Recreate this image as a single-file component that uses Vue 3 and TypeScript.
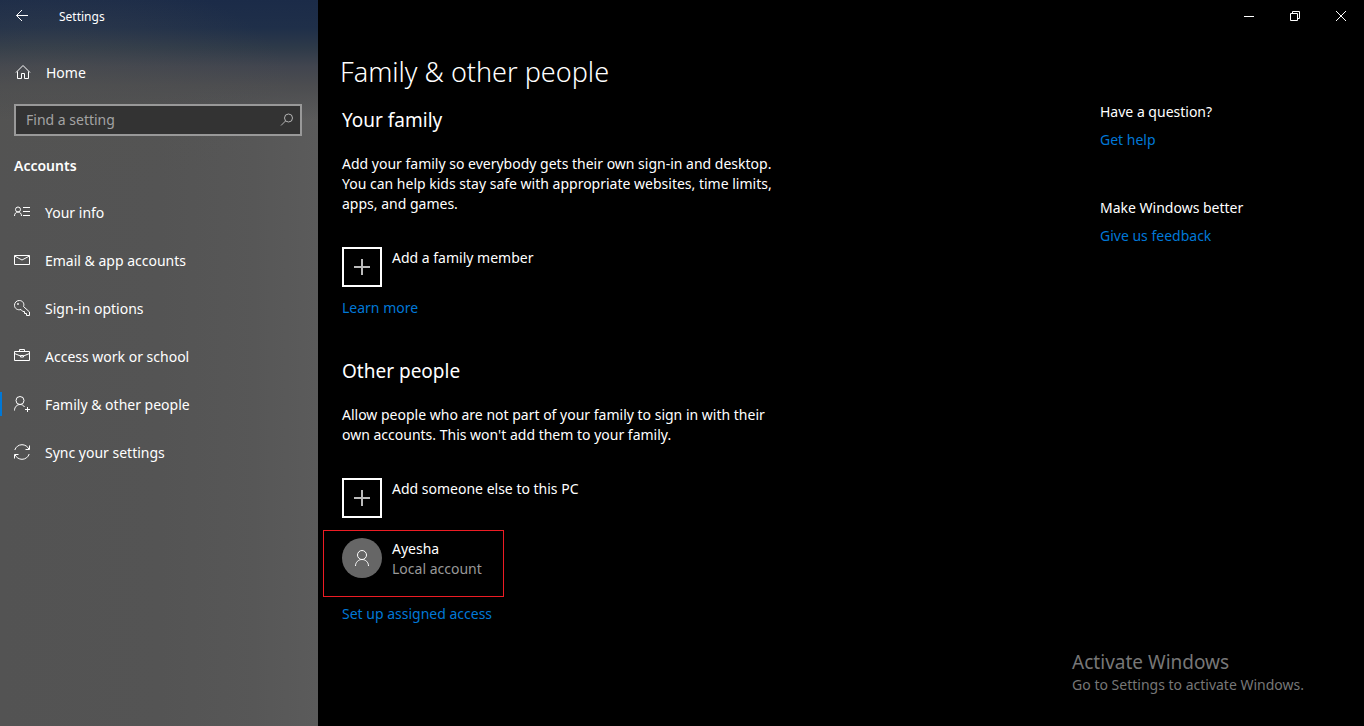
<script setup lang="ts">
import { ref } from 'vue'

type IconName = 'info' | 'mail' | 'key' | 'work' | 'family' | 'sync'

interface NavItem {
  label: string
  icon: IconName
}

const query = ref('')
const active = ref('Family & other people')

const items: NavItem[] = [
  { label: 'Your info', icon: 'info' },
  { label: 'Email & app accounts', icon: 'mail' },
  { label: 'Sign-in options', icon: 'key' },
  { label: 'Access work or school', icon: 'work' },
  { label: 'Family & other people', icon: 'family' },
  { label: 'Sync your settings', icon: 'sync' },
]
</script>

<template>
  <div class="window">
    <aside class="sidebar">
      <header class="titlebar">
        <button class="back" type="button" aria-label="Back">
          <svg class="icon" width="14" height="16" viewBox="0 0 14 16">
            <path d="M13 7.500H1.500M7 2L1.500 7.500 7 13" />
          </svg>
        </button>
        <span class="app-name">Settings</span>
      </header>

      <a class="nav-link home" href="#home">
        <svg class="icon" width="16" height="16" viewBox="0 0 16 16">
          <path d="M1 8.500L8 1.500l7 7M2.500 7.500v7h4v-5h3v5h4v-7" />
        </svg>
        <span>Home</span>
      </a>

      <div class="search">
        <input v-model="query" type="text" placeholder="Find a setting" aria-label="Find a setting" />
        <svg class="icon glass" width="14" height="14" viewBox="0 0 14 14">
          <circle cx="8.500" cy="5" r="4" />
          <path d="M5.500 8L1 12.500" />
        </svg>
      </div>

      <h2 class="group">Accounts</h2>

      <nav class="nav">
        <a
          v-for="item in items"
          :key="item.label"
          class="nav-link"
          :class="{ active: item.label === active }"
          href="#"
          @click.prevent="active = item.label"
        >
          <svg class="icon" width="16" height="16" viewBox="0 0 16 16">
            <template v-if="item.icon === 'info'">
              <circle cx="4" cy="5.500" r="2.500" />
              <path d="M.5 12c0-2.500 1.500-4 3.500-4s3.500 1.500 3.500 4" />
              <path d="M9 3.500h7M9 7.500h7M9 11.500h7" />
            </template>
            <template v-else-if="item.icon === 'mail'">
              <path d="M.5 3.500h15v9H.5zM.5 4L8 8l7.500-4" />
            </template>
            <template v-else-if="item.icon === 'key'">
              <path d="M7 9.500C3.500 10.500.5 8.500.5 5.300.5 2.500 2.600.5 5.300.5c3.200 0 5.500 2.900 4.200 6l6 5.500v3.500h-3v-2h-2v-2H8.800z" />
              <circle cx="4" cy="4" r=".6" />
            </template>
            <template v-else-if="item.icon === 'work'">
              <path d="M.5 3.500h15v9H.5zM5.500 3.500v-2h5v2M.5 5.500l6 2.500M15.500 5.500l-6 2.500" />
              <path d="M6.500 7.500h3v1.500h-3z" />
            </template>
            <template v-else-if="item.icon === 'family'">
              <circle cx="6" cy="4.500" r="4" />
              <path d="M.5 14.500c0-3.500 2.500-6 5.500-6 2 0 3.500.8 4.500 2.500M13.500 11v5M11 13.500h5" />
            </template>
            <template v-else>
              <path d="M.8 6C1.800 2.800 4.700.7 8 .7c3 0 5.800 1.800 7 4.600M15.500 1.500v4h-4" />
              <path d="M15.200 10c-1 3.200-3.900 5.300-7.200 5.300-3 0-5.800-1.800-7-4.600M.5 14.500v-4h4" />
            </template>
          </svg>
          <span>{{ item.label }}</span>
        </a>
      </nav>
    </aside>

    <div class="content">
      <header class="titlebar caption">
        <button type="button" aria-label="Minimize">
          <svg class="icon" width="10" height="10" viewBox="0 0 10 10"><path d="M0 5.500h10" /></svg>
        </button>
        <button type="button" aria-label="Restore">
          <svg class="icon" width="10" height="10" viewBox="0 0 10 10">
            <path d="M.5 2.500h7v7h-7zM2.500 2.500v-2h7v7h-2" />
          </svg>
        </button>
        <button type="button" aria-label="Close">
          <svg class="icon" width="10" height="10" viewBox="0 0 10 10"><path d="M0 0l10 10M10 0L0 10" /></svg>
        </button>
      </header>

      <div class="columns">
        <main class="main">
          <h1>Family &amp; other people</h1>

          <section>
            <h2>Your family</h2>
            <p>
              Add your family so everybody gets their own sign-in and desktop. You can help kids stay safe
              with appropriate websites, time limits, apps, and games.
            </p>
            <button class="add" type="button">
              <span class="plus">
                <svg class="icon" width="16" height="16" viewBox="0 0 16 16"><path d="M8 0v16M0 8h16" /></svg>
              </span>
              <span class="label">Add a family member</span>
            </button>
            <a class="after-add" href="#learn">Learn more</a>
          </section>

          <section>
            <h2>Other people</h2>
            <p>
              Allow people who are not part of your family to sign in with their own accounts. This won't
              add them to your family.
            </p>
            <button class="add" type="button">
              <span class="plus">
                <svg class="icon" width="16" height="16" viewBox="0 0 16 16"><path d="M8 0v16M0 8h16" /></svg>
              </span>
              <span class="label">Add someone else to this PC</span>
            </button>
            <button class="account" type="button">
              <span class="avatar">
                <svg class="icon" width="16" height="18" viewBox="0 0 16 18">
                  <circle cx="8" cy="6" r="4.500" />
                  <path d="M1.500 17c0-3.700 2.800-6.500 6.500-6.500s6.500 2.800 6.500 6.500" />
                </svg>
              </span>
              <span class="label who">
                <span>Ayesha</span>
                <span class="kind">Local account</span>
              </span>
            </button>
            <a class="after-account" href="#assigned">Set up assigned access</a>
          </section>
        </main>

        <aside class="help">
          <h3>Have a question?</h3>
          <a href="#help">Get help</a>
          <h3>Make Windows better</h3>
          <a href="#feedback">Give us feedback</a>
        </aside>
      </div>

      <div class="watermark">
        <strong>Activate Windows</strong>
        <span>Go to Settings to activate Windows.</span>
      </div>
    </div>
  </div>
</template>

<style>
body {
  margin: 0;
  background: #000;
}
</style>

<style scoped>
.window {
  display: flex;
  min-height: 100vh;
  background: #000;
  color: #fff;
  font-family: 'Segoe UI', 'Noto Sans', 'Open Sans', sans-serif;
  font-size: 14px;
  line-height: 20px;
}

h1,
h2,
h3,
p {
  margin: 0;
  font-weight: 400;
}

button {
  padding: 0;
  border: 0;
  background: none;
  color: inherit;
  font: inherit;
  text-align: left;
}

a {
  color: #0078d7;
  text-decoration: none;
}

.icon {
  flex: none;
  fill: none;
  stroke: currentColor;
  stroke-width: 1;
}

.titlebar {
  display: flex;
  align-items: center;
  height: 32px;
}

.sidebar {
  flex: none;
  box-sizing: border-box;
  width: 318px;
  background:
    radial-gradient(240px 110px at 50px 84px, rgba(83, 83, 80, 0.4), rgba(83, 83, 80, 0.15) 60%, rgba(83, 83, 80, 0)),
    linear-gradient(180deg, #1b2b48 0, #1f2f49 28px, #2e3a49 48px, #41454f 66px, #4c4d50 86px, rgba(83, 83, 83, 0) 120px),
    linear-gradient(90deg, #535353 0, #545454 50%, #575757 80%, #5b5b5b 100%);
}

.back {
  display: flex;
  align-items: center;
  width: 45px;
  height: 32px;
  padding-left: 15px;
  box-sizing: border-box;
}

.app-name {
  padding: 2px 0 0 14px;
  font-size: 12px;
}

.nav-link {
  display: flex;
  align-items: center;
  gap: 15px;
  height: 48px;
  padding-left: 14px;
  color: #fff;
}

.nav-link span {
  padding-top: 2px;
}

.home {
  height: 40px;
  margin-top: 20px;
  padding-left: 15px;
}

.search {
  display: flex;
  align-items: center;
  height: 28px;
  margin: 12px 16px 0 14px;
  padding: 0 6px 0 10px;
  border: 2px solid #999;
  background: #333;
}

.search input {
  flex: 1;
  min-width: 0;
  padding: 0;
  border: 0;
  outline: 0;
  background: none;
  color: #fff;
  font: inherit;
}

.search input::placeholder {
  color: #a3a3a3;
  opacity: 1;
}

.glass {
  color: #b4b4b4;
}

.group {
  margin: 20px 14px 12px;
  font-size: 14px;
  font-weight: 600;
}

.nav-link.active {
  background: linear-gradient(#0078d7, #0078d7) left center / 2px 24px no-repeat;
}

.content {
  position: relative;
  flex: 1;
  min-width: 0;
}

.caption {
  justify-content: flex-end;
}

.caption button {
  display: flex;
  align-items: center;
  justify-content: center;
  width: 46px;
  height: 32px;
}

.columns {
  display: flex;
  justify-content: space-between;
  padding-left: 22px;
}

.main {
  padding-top: 22px;
}

h1 {
  font-size: 27px;
  font-weight: 300;
  line-height: 36px;
}

section {
  max-width: 450px;
  margin-top: 16px;
  padding-left: 2px;
}

section + section {
  margin-top: 39px;
}

section h2 {
  font-size: 19px;
  line-height: 28px;
}

section p {
  margin-top: 20px;
}

.add {
  display: flex;
  gap: 10px;
  margin-top: 33px;
}

.label {
  padding-top: 1px;
}

.plus {
  display: flex;
  align-items: center;
  justify-content: center;
  box-sizing: border-box;
  width: 40px;
  height: 40px;
  border: 2px solid #fff;
}

.plus .icon {
  stroke-width: 2;
  color: #bbb;
}

section a {
  display: block;
  width: fit-content;
}

.after-add {
  margin-top: 11px;
}

.account {
  display: flex;
  gap: 10px;
  margin: 12px 0 0 -19px;
  padding: 7px 21px 17px 18px;
  border: 1px solid #ed1c24;
}

.avatar {
  display: flex;
  align-items: center;
  justify-content: center;
  width: 40px;
  height: 40px;
  border-radius: 50%;
  background: #666;
}

.who {
  display: flex;
  flex-direction: column;
}

.kind {
  color: #999;
}

.after-account {
  margin-top: 7px;
}

.help {
  flex: none;
  box-sizing: border-box;
  width: 264px;
  padding-top: 70px;
}

.help h3 {
  font-size: 14px;
}

.help a {
  display: block;
  width: fit-content;
  margin-top: 8px;
}

.help a + h3 {
  margin-top: 48px;
}

.watermark {
  position: absolute;
  right: 60px;
  bottom: 31px;
  display: flex;
  flex-direction: column;
  color: #777;
}

.watermark strong {
  font-size: 19px;
  font-weight: 400;
  line-height: 26px;
}
</style>
